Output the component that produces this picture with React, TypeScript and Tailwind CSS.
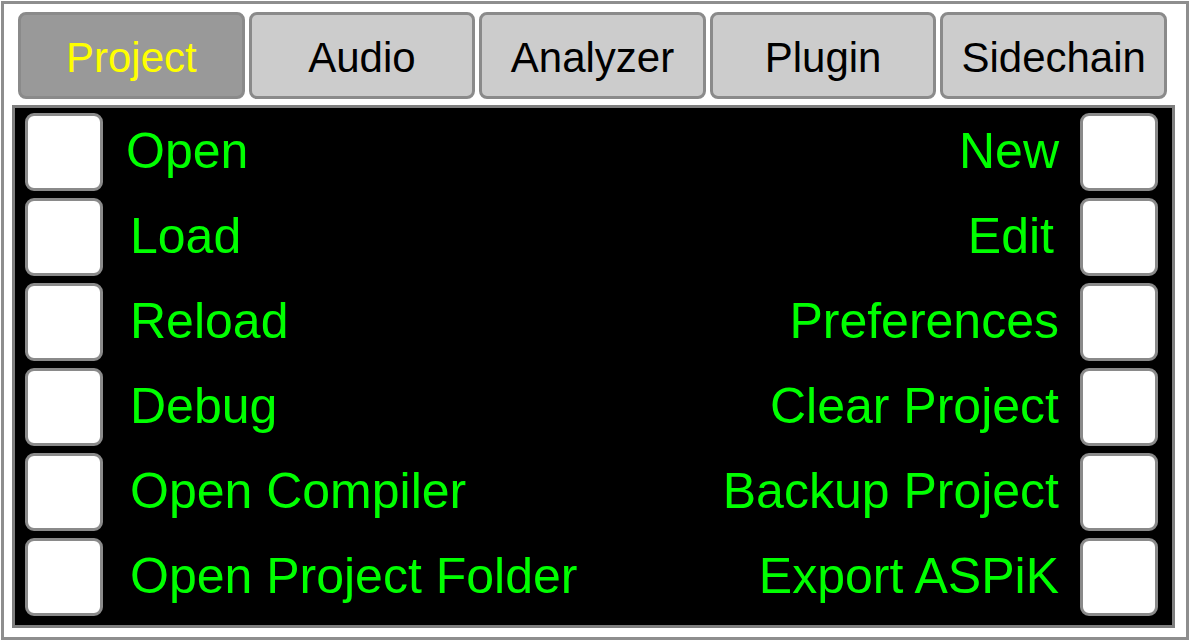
import React from "react";

const tabs = ["Project", "Audio", "Analyzer", "Plugin", "Sidechain"];

const rows = [
  { left: "Open", right: "New", leftGap: "ml-[23px]", rightGap: "mr-[21px]" },
  { left: "Load", right: "Edit", leftGap: "ml-[27px]", rightGap: "mr-[26px]" },
  { left: "Reload", right: "Preferences", leftGap: "ml-[27px]", rightGap: "mr-[21px]" },
  { left: "Debug", right: "Clear Project", leftGap: "ml-[27px]", rightGap: "mr-[21px]" },
  { left: "Open Compiler", right: "Backup Project", leftGap: "ml-[27px]", rightGap: "mr-[21px]" },
  { left: "Open Project Folder", right: "Export ASPiK", leftGap: "ml-[27px]", rightGap: "mr-[21px]" },
];

const Square = () => (
  <div className="w-[78px] h-[78px] shrink-0 bg-white border-[3px] border-[#8a8a8a] rounded-[9px]" />
);

const App = () => {
  return (
    <div
      className="w-[1191px] h-[641px] bg-white overflow-hidden"
      style={{ fontFamily: '"Liberation Sans", Arial, sans-serif' }}
    >
      <div className="ml-[1px] mt-[1px] w-[1188px] h-[639px] border-[3px] border-[#8e8e8e] flex flex-col">
        {/* Tabs */}
        <div className="mt-[8px] ml-[14px] w-[1149px] h-[87px] flex gap-[4px]">
          {tabs.map((tab, i) => (
            <div
              key={tab}
              className={
                i === 0
                  ? "flex-1 flex items-center justify-center pt-[3px] border-[3px] border-[#8a8a8a] rounded-[8px] bg-[#999999] text-[#ffff00] text-[42px]"
                  : "flex-1 flex items-center justify-center pt-[3px] border-[3px] border-[#8a8a8a] rounded-[8px] bg-[#cccccc] text-black text-[42px]"
              }
            >
              {tab}
            </div>
          ))}
        </div>

        {/* Button panel */}
        <div className="mt-[6px] ml-[8px] w-[1163px] h-[523px] border-[3px] border-[#7f7f7f] bg-black pt-[5px] pl-[10px] pr-[14px] flex flex-col gap-[7px]">
          {rows.map((row) => (
            <div key={row.left} className="flex items-center justify-between h-[78px]">
              <div className="flex items-center">
                <Square />
                <span className={`${row.leftGap} pb-[2px] text-[#00ff00] text-[50px] leading-none`}>
                  {row.left}
                </span>
              </div>
              <div className="flex items-center">
                <span className={`${row.rightGap} pb-[2px] text-[#00ff00] text-[50px] leading-none`}>
                  {row.right}
                </span>
                <Square />
              </div>
            </div>
          ))}
        </div>
      </div>
    </div>
  );
};

export default App;
